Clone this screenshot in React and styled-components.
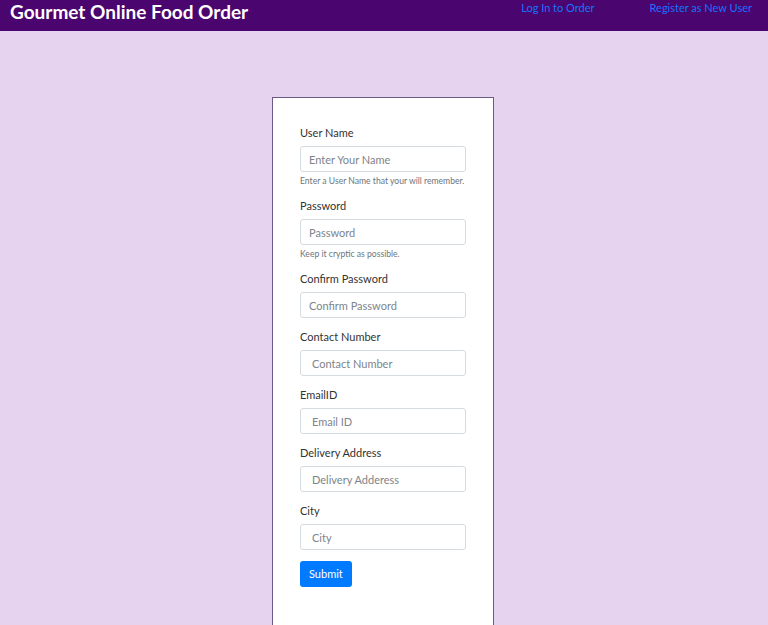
import React from "react";
import styled, { createGlobalStyle } from "styled-components";

const GlobalStyle = createGlobalStyle`
  html, body {
    margin: 0;
    padding: 0;
    background: #e5d3f0;
    font-family: "Segoe UI", Lato, "Open Sans", sans-serif;
    color: #212529;
  }
  * {
    box-sizing: border-box;
  }
`;

const Page = styled.div`
  min-height: 625px;
  background: #e5d3f0;
`;

const TopBar = styled.header`
  height: 31px;
  background: #4a056e;
  display: flex;
  align-items: flex-start;
  justify-content: space-between;
  padding: 0 16px 0 10px;
`;

const Brand = styled.div`
  color: #ffffff;
  font-size: 19px;
  font-weight: 700;
  line-height: 24px;
`;

const NavLinks = styled.nav`
  display: flex;
  gap: 55px;
  padding-top: 1px;
`;

const NavLink = styled.a`
  color: #1673ff;
  font-size: 11px;
  line-height: 14px;
  text-decoration: none;
`;

const Main = styled.main`
  display: flex;
  justify-content: center;
  padding-top: 66px;
  padding-right: 2px;
`;

const FormCard = styled.form`
  width: 222px;
  min-height: 540px;
  background: #ffffff;
  border: 1px solid #6c5a86;
  padding: 27px 27px 30px 27px;
`;

const Field = styled.div`
  margin-bottom: 11px;
`;

const Label = styled.label`
  display: block;
  font-size: 11px;
  line-height: 16px;
  color: #333;
  margin-bottom: 5px;
`;

const Input = styled.input`
  display: block;
  width: 100%;
  height: 26px;
  border: 1px solid #d6dbe0;
  border-radius: 3px;
  padding: 0 0 0 ${(p) => p.$indent || 8}px;
  font-family: inherit;
  font-size: 11px;
  color: #495057;
  background: #fff;
  outline: none;

  &::placeholder {
    color: #7d848b;
  }
`;

const Hint = styled.small`
  display: block;
  margin-top: 3px;
  font-size: 8.6px;
  line-height: 12px;
  color: #6c757d;
  white-space: nowrap;
`;

const SubmitButton = styled.button`
  height: 26px;
  padding: 0 9px;
  border: none;
  border-radius: 3px;
  background: #007bff;
  color: #fff;
  font-family: inherit;
  font-size: 11px;
  line-height: 24px;
  cursor: pointer;
`;

const fields = [
  { label: "User Name", placeholder: "Enter Your Name", hint: "Enter a User Name that your will remember.", type: "text" },
  { label: "Password", placeholder: "Password", hint: "Keep it cryptic as possible.", type: "password" },
  { label: "Confirm Password", placeholder: "Confirm Password", type: "password" },
  { label: "Contact Number", placeholder: "Contact Number", indent: 11, type: "text" },
  { label: "EmailID", placeholder: "Email ID", indent: 11, type: "email" },
  { label: "Delivery Address", placeholder: "Delivery Adderess", indent: 11, type: "text" },
  { label: "City", placeholder: "City", indent: 11, type: "text" },
];

export default function App() {
  return (
    <Page>
      <GlobalStyle />
      <TopBar>
        <Brand>Gourmet Online Food Order</Brand>
        <NavLinks>
          <NavLink href="#">Log In to Order</NavLink>
          <NavLink href="#">Register as New User</NavLink>
        </NavLinks>
      </TopBar>
      <Main>
        <FormCard onSubmit={(e) => e.preventDefault()}>
          {fields.map((f) => (
            <Field key={f.label}>
              <Label>{f.label}</Label>
              <Input type={f.type} placeholder={f.placeholder} $indent={f.indent} />
              {f.hint && <Hint>{f.hint}</Hint>}
            </Field>
          ))}
          <SubmitButton type="submit">Submit</SubmitButton>
        </FormCard>
      </Main>
    </Page>
  );
}
